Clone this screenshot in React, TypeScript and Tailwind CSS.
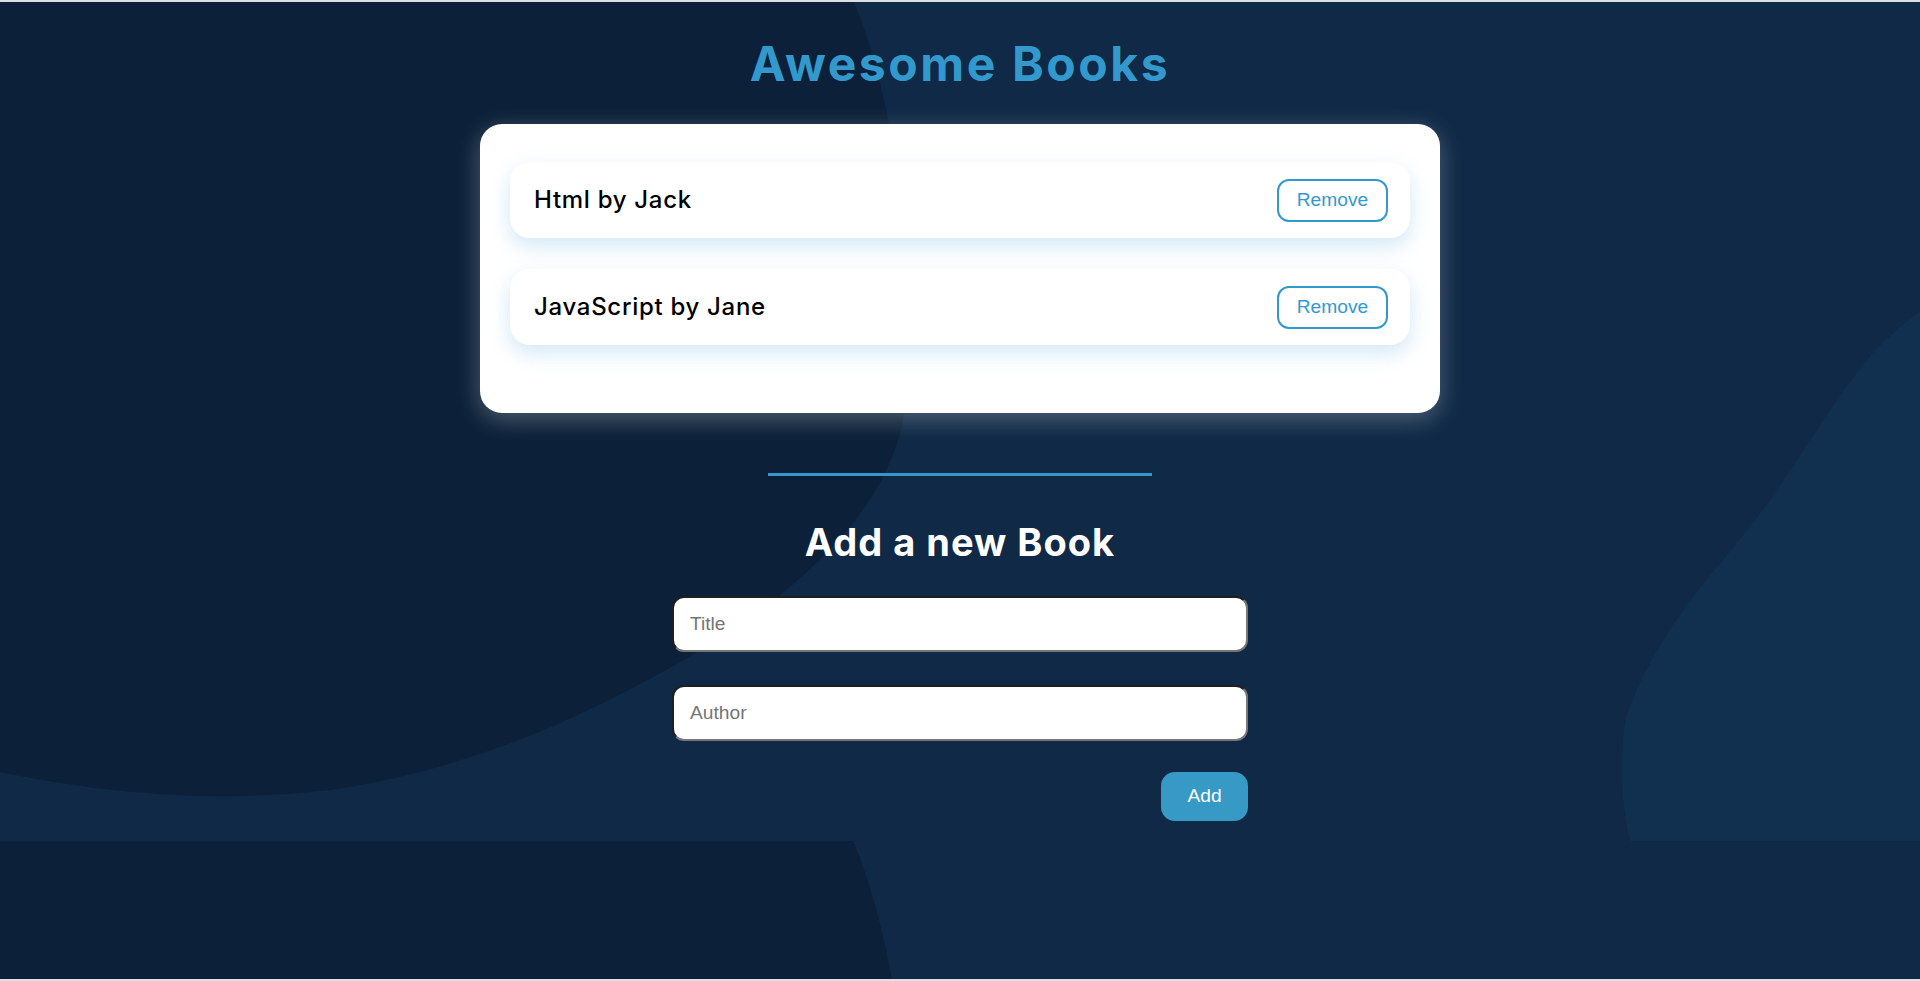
import React, { useState } from 'react';

type Book = { id: number; title: string; author: string };

const initialBooks: Book[] = [
  { id: 1, title: 'Html', author: 'Jack' },
  { id: 2, title: 'JavaScript', author: 'Jane' },
];

function Backdrop() {
  return (
    <svg
      className="absolute inset-0 w-full h-full"
      viewBox="0 2 1920 977"
      preserveAspectRatio="none"
      aria-hidden="true"
    >
      <defs>
        <g id="tile">
          <rect x="0" y="0" width="1920" height="841" fill="#0f2946" />
          <path
            d="M0 0 L853 0 C892 90 918 260 906 400 C897 500 810 585 692 655 C590 715 470 770 330 790 C200 805 90 790 0 772 Z"
            fill="#0c2139"
          />
          <path
            d="M1920 312 C1860 350 1820 430 1770 500 C1720 570 1660 620 1625 720 C1618 780 1625 820 1630 841 L1920 841 Z"
            fill="#11304f"
          />
        </g>
      </defs>
      <use href="#tile" />
      <use href="#tile" y="841" />
    </svg>
  );
}

export default function App() {
  const [books, setBooks] = useState<Book[]>(initialBooks);
  const [title, setTitle] = useState('');
  const [author, setAuthor] = useState('');

  const handleAdd = (e: React.FormEvent) => {
    e.preventDefault();
    if (!title.trim() || !author.trim()) return;
    setBooks((prev) => [...prev, { id: Date.now(), title: title.trim(), author: author.trim() }]);
    setTitle('');
    setAuthor('');
  };

  return (
    <div className="relative h-[981px] overflow-hidden border-y-2 border-[#dcdfe4] bg-[#0f2946]">
      <Backdrop />

      <main className="relative flex flex-col items-center">
        <h1 className="mt-[33px] font-['Inter',sans-serif] font-bold text-[48px] leading-[58px] tracking-[2.6px] text-[#3399cc]">
          Awesome Books
        </h1>

        {/* Book list */}
        <section className="mt-[31px] w-[960px] bg-white rounded-[22px] pt-[38px] px-[30px] pb-[68px] flex flex-col gap-[31px] shadow-[0_6px_24px_rgba(255,255,255,0.28)]">
          {books.map((book) => (
            <div
              key={book.id}
              className="h-[76px] flex items-center justify-between pl-[24px] pr-[22px] bg-white rounded-[20px] shadow-[0_8px_20px_rgba(52,152,219,0.22)]"
            >
              <p className="font-['Inter',sans-serif] font-medium text-[24px] tracking-[0.7px] text-black">
                {book.title} by {book.author}
              </p>
              <button
                type="button"
                onClick={() => setBooks((prev) => prev.filter((b) => b.id !== book.id))}
                className="w-[111px] h-[43px] rounded-[12px] border-[2.5px] border-[#3399cc] bg-white font-['Liberation_Sans',Arial,sans-serif] text-[19.2px] text-[#3399cc]"
              >
                Remove
              </button>
            </div>
          ))}
        </section>

        <hr className="mt-[60px] w-[384px] h-[3px] border-0 bg-[#3399cc]" />

        <h2 className="mt-[43px] font-['Inter',sans-serif] font-bold text-[38px] leading-[46px] tracking-[1px] text-white">
          Add a new Book
        </h2>

        {/* Add form */}
        <form onSubmit={handleAdd} className="mt-[31px] w-[576px] flex flex-col gap-[33px]">
          <input
            type="text"
            placeholder="Title"
            value={title}
            onChange={(e) => setTitle(e.target.value)}
            className="w-full h-[56px] px-[16px] rounded-[12px] border-2 border-t-[#1f1f1f] border-l-[#1f1f1f] border-r-[#767676] border-b-[#767676] bg-white font-['Liberation_Sans',Arial,sans-serif] text-[19.2px] text-black placeholder:text-[#757575] outline-none"
          />
          <input
            type="text"
            placeholder="Author"
            value={author}
            onChange={(e) => setAuthor(e.target.value)}
            className="w-full h-[56px] px-[16px] rounded-[12px] border-2 border-t-[#1f1f1f] border-l-[#1f1f1f] border-r-[#767676] border-b-[#767676] bg-white font-['Liberation_Sans',Arial,sans-serif] text-[19.2px] text-black placeholder:text-[#757575] outline-none"
          />
          <div className="flex justify-end -mt-[2px]">
            <button
              type="submit"
              className="w-[87px] h-[49px] rounded-[14px] bg-[#3799c6] font-['Liberation_Sans',Arial,sans-serif] text-[19.2px] text-white"
            >
              Add
            </button>
          </div>
        </form>
      </main>
    </div>
  );
}
